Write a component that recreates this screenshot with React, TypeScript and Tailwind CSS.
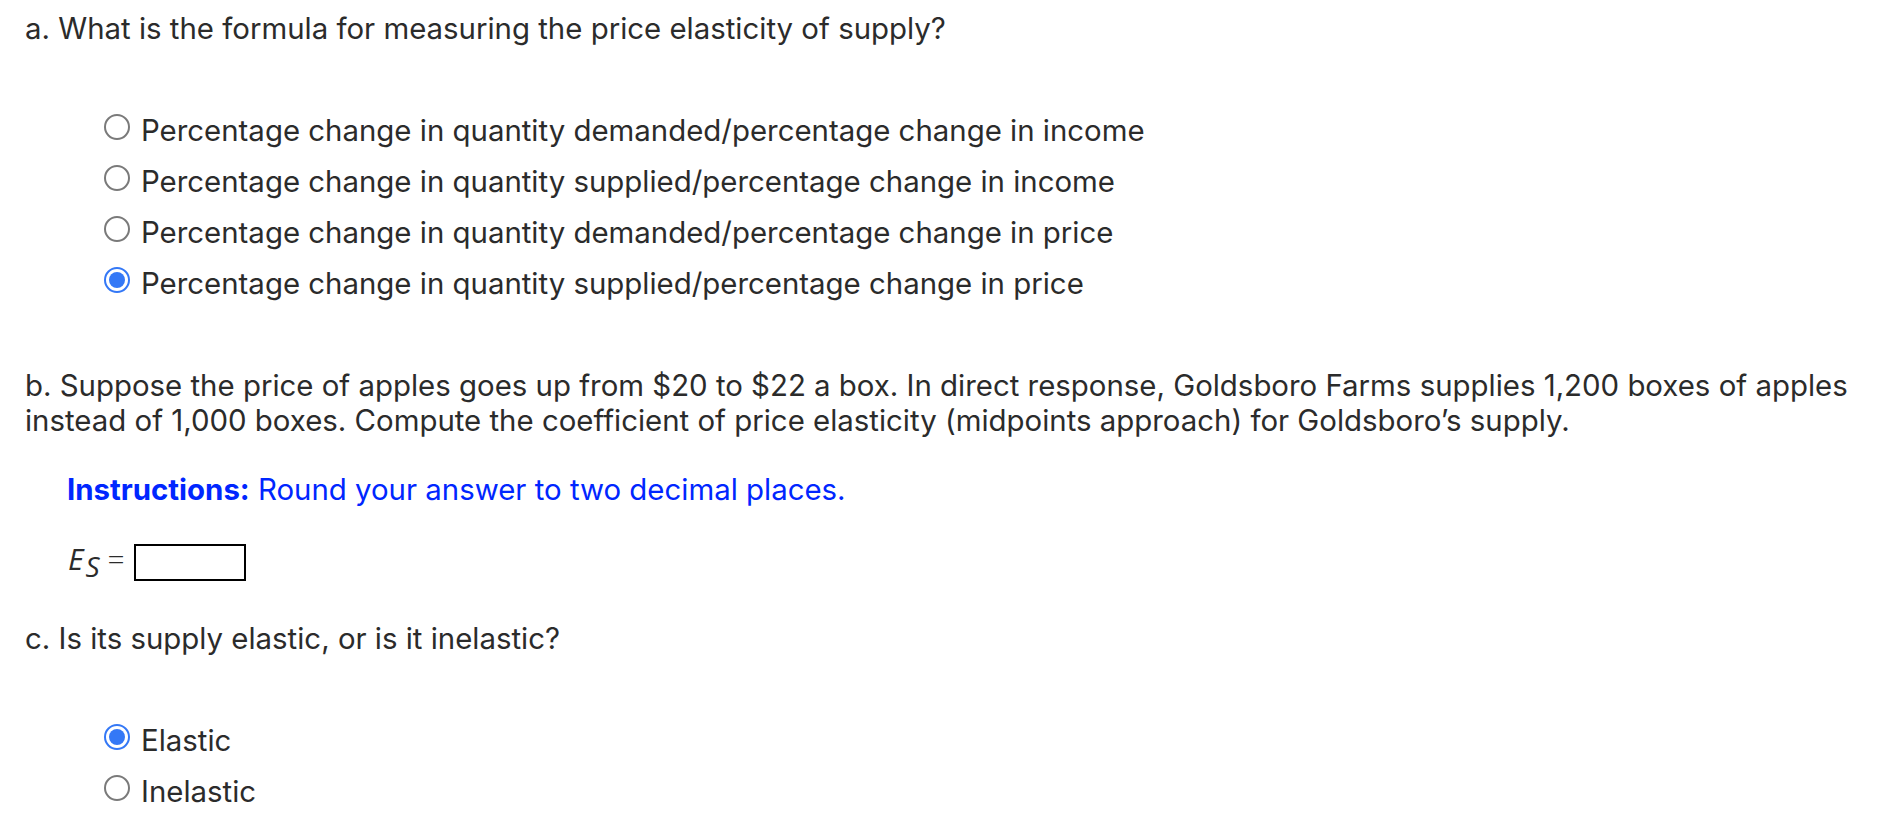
const FONT = "font-['Inter',sans-serif]";

const FORMULAS = [
  { label: "Percentage change in quantity demanded/percentage change in income", checked: false },
  { label: "Percentage change in quantity supplied/percentage change in income", checked: false },
  { label: "Percentage change in quantity demanded/percentage change in price", checked: false },
  { label: "Percentage change in quantity supplied/percentage change in price", checked: true },
];

const SUPPLY = [
  { label: "Elastic", checked: true },
  { label: "Inelastic", checked: false },
];

function Radio({ checked }: { checked: boolean }) {
  if (checked) {
    return (
      <span className="mt-[9px] flex size-[26px] shrink-0 items-center justify-center rounded-full border-2 border-[#3478f6] bg-white">
        <span className="size-[16px] rounded-full bg-[#3478f6]" />
      </span>
    );
  }
  return <span className="mt-[9px] block size-[26px] shrink-0 rounded-full border-2 border-[#7a7a7a] bg-white" />;
}

function Option({ label, checked }: { label: string; checked: boolean }) {
  return (
    <label className="flex items-start">
      <Radio checked={checked} />
      <span className="ml-[11px] whitespace-nowrap leading-[51px]">{label}</span>
    </label>
  );
}

export default function App() {
  return (
    <div className={`${FONT} min-h-screen bg-white pl-[25px] pt-[11px] text-[29.4px] leading-[35px] text-[#2b2b2b]`}>
      {/* a */}
      <p>a. What is the formula for measuring the price elasticity of supply?</p>
      <div className="ml-[79px] mt-[59px]">
        {FORMULAS.map((o) => (
          <Option key={o.label} {...o} />
        ))}
      </div>

      {/* b */}
      <p className="mt-[59px] max-w-[1862px]">
        b. Suppose the price of apples goes up from $20 to $22 a box. In direct response, Goldsboro Farms supplies
        1,200 boxes of apples instead of 1,000 boxes. Compute the coefficient of price elasticity (midpoints approach)
        for Goldsboro’s supply.
      </p>
      <p className="ml-[42px] mt-[34px] text-[#0026ff]">
        <span className="font-bold">Instructions:</span> Round your answer to two decimal places.
      </p>
      <div className="ml-[43px] mt-[37px] flex h-[37px] items-start">
        <span className="font-['Open_Sans',sans-serif] text-[30px] italic leading-none">
          E<sub className="ml-[2px] text-[28px]">S</sub>
        </span>
        <span className="ml-[8px] font-['Open_Sans',sans-serif] text-[30px] font-light leading-none">=</span>
        <span className="ml-[9px] block h-[37px] w-[112px] border-2 border-black bg-white" />
      </div>

      {/* c */}
      <p className="mt-[40px]">c. Is its supply elastic, or is it inelastic?</p>
      <div className="ml-[79px] mt-[59px]">
        {SUPPLY.map((o) => (
          <Option key={o.label} {...o} />
        ))}
      </div>
    </div>
  );
}
